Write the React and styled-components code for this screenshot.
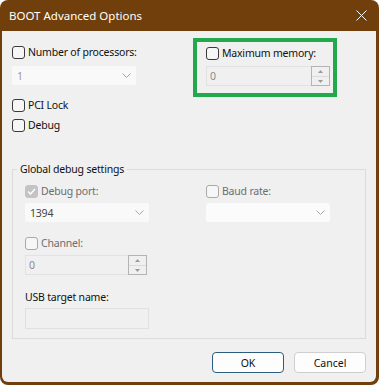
import React from "react";
import styled, { createGlobalStyle } from "styled-components";

const GlobalStyle = createGlobalStyle`
  html, body {
    margin: 0;
    padding: 0;
    background: #ffffff;
  }
  body {
    font-family: "Noto Sans", "Liberation Sans", sans-serif;
    font-size: 10.5px;
    letter-spacing: -0.2px;
    color: #111;
  }
`;

const Window = styled.div`
  width: 379px;
  height: 385px;
  box-sizing: border-box;
  background: #703f0b;
  border-radius: 8px;
  padding: 0 3px 3px 2px;
  display: flex;
  flex-direction: column;
`;

const TitleBar = styled.div`
  height: 31px;
  flex-shrink: 0;
  display: flex;
  align-items: center;
  justify-content: space-between;
  padding: 0 9px 0 7px;
  color: #fff;
  font-size: 11.5px;
  letter-spacing: 0;
`;

const Body = styled.div`
  flex: 1;
  background: #f0f0f0;
  border-radius: 0 0 6px 6px;
  padding: 7px 10px 0 10px;
  display: flex;
  flex-direction: column;
`;

const TopGrid = styled.div`
  display: grid;
  grid-template-columns: 181px 144px;
  align-items: start;
`;

const Column = styled.div`
  display: flex;
  flex-direction: column;
  padding-top: ${(p) => p.$top || 0}px;
`;

const Highlight = styled.div`
  border: 4px solid #22a94b;
  padding: 4px 2px 7px 9px;
  display: flex;
  flex-direction: column;
`;

const CheckRow = styled.label`
  display: flex;
  align-items: center;
  height: 14px;
  gap: 3px;
  margin-top: ${(p) => p.$mt || 0}px;
  color: ${(p) => (p.$disabled ? "#6d6d6d" : "#111")};
  white-space: nowrap;
`;

const Box = styled.span`
  width: 13px;
  height: 13px;
  box-sizing: border-box;
  border-radius: 3px;
  border: 1px solid ${(p) => (p.$checked ? "#c3c3c3" : p.$disabled ? "#a9a9a9" : "#3a3a3a")};
  background: ${(p) => (p.$checked ? "#c3c3c3" : "#f6f6f6")};
  display: flex;
  align-items: center;
  justify-content: center;
  flex-shrink: 0;
`;

const Label = styled.div`
  height: 14px;
  display: flex;
  align-items: center;
  margin-top: ${(p) => p.$mt || 0}px;
`;

const Combo = styled.div`
  width: 124px;
  height: 19px;
  box-sizing: border-box;
  margin-top: ${(p) => p.$mt || 0}px;
  background: ${(p) => (p.$white ? "#fbfbfb" : "#f9f9f9")};
  border-radius: 2px;
  display: flex;
  align-items: center;
  justify-content: space-between;
  padding: 0 5px 0 5px;
  color: ${(p) => (p.$dark ? "#444" : "#9a9a9a")};
`;

const Spin = styled.div`
  width: ${(p) => p.$w || 124}px;
  height: 20px;
  box-sizing: border-box;
  margin-top: ${(p) => p.$mt || 0}px;
  border: 1px solid #e2e2e2;
  border-right: none;
  display: flex;
  align-items: stretch;
  color: #8a8a8a;
`;

const SpinValue = styled.div`
  flex: 1;
  display: flex;
  align-items: center;
  padding-left: 3px;
`;

const SpinButtons = styled.div`
  width: 17px;
  border: 1px solid #b4b4b4;
  margin: -1px 0;
  display: grid;
  grid-template-rows: 1fr 1fr;
  background: #f0f0f0;
`;

const SpinHalf = styled.div`
  display: flex;
  align-items: center;
  justify-content: center;
  & + & {
    border-top: 1px solid #dadada;
  }
`;

const Group = styled.fieldset`
  margin: 29px 0 0 0;
  border: 1px solid #dcdcdc;
  padding: 7px 12px 9px 12px;
  min-width: 0;
`;

const Legend = styled.legend`
  padding: 0 3px;
  margin-left: -8px;
  line-height: 16px;
`;

const GroupGrid = styled.div`
  display: grid;
  grid-template-columns: 181px 1fr;
`;

const TextBox = styled.div`
  width: 124px;
  height: 21px;
  box-sizing: border-box;
  margin-top: 4px;
  border: 1px solid #e0e0e0;
  background: #f0f0f0;
`;

const Footer = styled.div`
  margin-top: 13px;
  display: flex;
  justify-content: flex-end;
  gap: 10px;
`;

const Button = styled.button`
  width: 72px;
  height: 21px;
  box-sizing: border-box;
  border-radius: 4px;
  border: 1px solid ${(p) => (p.$primary ? "#2c5c7e" : "#cfcfcf")};
  background: #fdfdfd;
  font: inherit;
  color: #111;
  padding: 0;
`;

const Chevron = () => (
  <svg width="9" height="5" viewBox="0 0 9 5">
    <path d="M0.5 0.5 L4.5 4.5 L8.5 0.5" fill="none" stroke="#a5a5a5" strokeWidth="1" />
  </svg>
);

const Tick = () => (
  <svg width="9" height="7" viewBox="0 0 9 7">
    <path d="M1 3.5 L3.5 6 L8 1" fill="none" stroke="#fff" strokeWidth="1.4" />
  </svg>
);

const Arrow = ({ down }) => (
  <svg width="5" height="3" viewBox="0 0 5 3">
    <path d={down ? "M0 0 L5 0 L2.5 3 Z" : "M0 3 L5 3 L2.5 0 Z"} fill="#9a9a9a" />
  </svg>
);

const CloseIcon = () => (
  <svg width="11" height="11" viewBox="0 0 11 11">
    <path d="M0.5 0.5 L10.5 10.5 M10.5 0.5 L0.5 10.5" stroke="#fff" strokeWidth="1" />
  </svg>
);

function Check({ label, checked, disabled, mt }) {
  return (
    <CheckRow $mt={mt} $disabled={disabled}>
      <Box $checked={checked} $disabled={disabled}>
        {checked && <Tick />}
      </Box>
      {label}
    </CheckRow>
  );
}

function SpinBox({ value, mt, w }) {
  return (
    <Spin $mt={mt} $w={w}>
      <SpinValue>{value}</SpinValue>
      <SpinButtons>
        <SpinHalf>
          <Arrow />
        </SpinHalf>
        <SpinHalf>
          <Arrow down />
        </SpinHalf>
      </SpinButtons>
    </Spin>
  );
}

export default function App() {
  return (
    <>
      <GlobalStyle />
      <Window>
        <TitleBar>
          <span>BOOT Advanced Options</span>
          <CloseIcon />
        </TitleBar>
        <Body>
          <TopGrid>
            <Column $top={7}>
              <Check label="Number of processors:" />
              <Combo $mt={7}>
                <span>1</span>
                <Chevron />
              </Combo>
              <Check label="PCI Lock" mt={13} />
              <Check label="Debug" mt={6} />
            </Column>
            <Highlight>
              <Check label="Maximum memory:" />
              <SpinBox value="0" mt={6} />
            </Highlight>
          </TopGrid>

          <Group>
            <Legend>Global debug settings</Legend>
            <GroupGrid>
              <Column>
                <Check label="Debug port:" checked disabled />
                <Combo $mt={5} $dark>
                  <span>1394</span>
                  <Chevron />
                </Combo>
                <Check label="Channel:" disabled mt={14} />
                <SpinBox value="0" mt={5} w={122} />
                <Label $mt={15}>USB target name:</Label>
                <TextBox />
              </Column>
              <Column>
                <Check label="Baud rate:" disabled />
                <Combo $mt={5} $white>
                  <span />
                  <Chevron />
                </Combo>
              </Column>
            </GroupGrid>
          </Group>

          <Footer>
            <Button $primary>OK</Button>
            <Button>Cancel</Button>
          </Footer>
        </Body>
      </Window>
    </>
  );
}
